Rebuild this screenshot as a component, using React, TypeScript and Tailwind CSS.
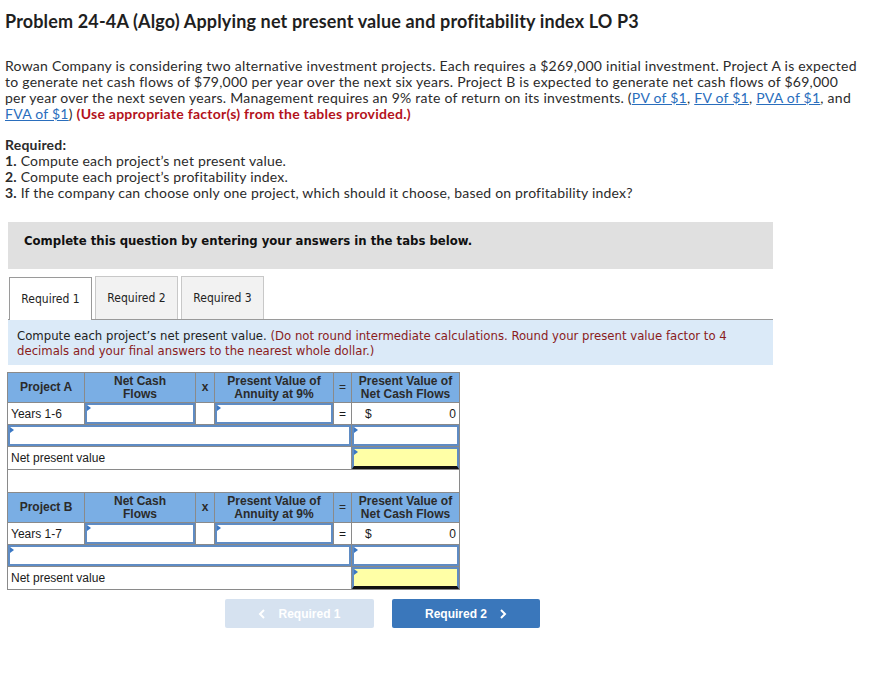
import React from "react";

const body = { fontFamily: "Lato, 'Open Sans', sans-serif" };
const tahoma = { fontFamily: "'DejaVu Sans Condensed', 'DejaVu Sans', sans-serif" };
const arial = { fontFamily: "'Liberation Sans', Arial, sans-serif" };

function Marker() {
  return (
    <span className="absolute left-0 top-0 w-0 h-0 border-t-[3px] border-b-[3px] border-l-[4px] border-t-transparent border-b-transparent border-l-[#3b78c4]" />
  );
}

function InputBox({ yellow = false, thickBottom = false }: { yellow?: boolean; thickBottom?: boolean }) {
  return (
    <div
      className={`relative h-full w-full border-2 border-[#5f8cc4] ${yellow ? "bg-[#ffffa6]" : "bg-white"} ${thickBottom ? "border-b-[#111] border-b-[3px]" : ""}`}
    >
      <Marker />
    </div>
  );
}

function ProjectRows({ name, years }: { name: string; years: string }) {
  const td = "border border-[#8a8a8a] p-0";
  return (
    <>
      <tr className="h-[30px] bg-[#7aaee4] text-[#2b2b2b] font-bold text-[12px] leading-[13px]">
        <td className={`${td} text-center`}>{name}</td>
        <td className={`${td} text-center`}>Net Cash<br />Flows</td>
        <td className={`${td} text-center`}>x</td>
        <td className={`${td} text-center`}>Present Value of<br />Annuity at 9%</td>
        <td className={`${td} text-center font-normal`}>=</td>
        <td className={`${td} text-center`}>Present Value of<br />Net Cash Flows</td>
      </tr>
      <tr className="h-[22px] text-[12px]">
        <td className={`${td} pl-[3px]`}>{years}</td>
        <td className={`${td} h-[22px]`}><InputBox /></td>
        <td className={td}></td>
        <td className={`${td} h-[22px]`}><InputBox /></td>
        <td className={`${td} text-center`}>=</td>
        <td className={td}>
          <div className="flex justify-between px-[13px] pr-[3px]">
            <span>$</span>
            <span>0</span>
          </div>
        </td>
      </tr>
      <tr className="h-[22px]">
        <td className={`${td} h-[22px]`} colSpan={5}><InputBox /></td>
        <td className={`${td} h-[22px]`}><InputBox /></td>
      </tr>
      <tr className="h-[23px] text-[12px]">
        <td className={`${td} pl-[3px]`} colSpan={5}>Net present value</td>
        <td className={`${td} h-[23px]`}><InputBox yellow thickBottom /></td>
      </tr>
    </>
  );
}

export default function App() {
  const link = "text-[#2a6ebd] underline";
  return (
    <div className="w-[883px] min-h-[692px] bg-white text-[#2b2b2b]">
      <div className="px-[5px] pt-[11px]" style={body}>
        <h1 className="text-[18px] leading-[20px] font-bold text-[#1f1f1f] tracking-[0.15px]">
          Problem 24-4A (Algo) Applying net present value and profitability index LO P3
        </h1>
        <p className="mt-[27px] w-[853px] text-[14px] leading-[16px] tracking-[0.25px]">
          Rowan Company is considering two alternative investment projects. Each requires a $269,000 initial investment. Project A is expected to generate net cash flows of $79,000 per year over the next six years. Project B is expected to generate net cash flows of $69,000 per year over the next seven years. Management requires an 9% rate of return on its investments. (<span className={link}>PV of $1</span>, <span className={link}>FV of $1</span>, <span className={link}>PVA of $1</span>, and <span className={link}>FVA of $1</span>){" "}
          <span className="font-bold text-[#b3121b]">(Use appropriate factor(s) from the tables provided.)</span>
        </p>
        <div className="mt-[15px] text-[14px] leading-[16px] tracking-[0.2px]">
          <div className="font-bold">Required:</div>
          <div><b>1.</b> Compute each project’s net present value.</div>
          <div><b>2.</b> Compute each project’s profitability index.</div>
          <div><b>3.</b> If the company can choose only one project, which should it choose, based on profitability index?</div>
        </div>
      </div>

      <div className="ml-[8px] w-[765px]" style={tahoma}>
        <div className="mt-[21px] h-[47px] bg-[#e0e0e0] pl-[16px] pt-[11px] text-[13px] leading-[16px] font-bold text-[#111]">
          Complete this question by entering your answers in the tabs below.
        </div>
        <div className="mt-[8px] flex gap-[3px] border-b border-[#9a9a9a] h-[43px] items-end">
          <div className="h-[43px] w-[83px] ml-[1px] bg-white border border-b-0 border-[#9a9a9a] flex items-center justify-center text-[12px] text-[#222] -mb-px">
            Required 1
          </div>
          <div className="h-[43px] w-[83px] bg-[#f2f2f2] border border-b-0 border-[#c8c8c8] flex items-center justify-center text-[12px] text-[#222]">
            Required 2
          </div>
          <div className="h-[43px] w-[83px] bg-[#f2f2f2] border border-b-0 border-[#c8c8c8] flex items-center justify-center text-[12px] text-[#222]">
            Required 3
          </div>
        </div>
        <div className="bg-[#dbeaf8] h-[45px] pl-[9px] pt-[8px] text-[13px] leading-[15px] text-[#222]">
          Compute each project’s net present value.{" "}
          <span className="text-[#8a1c1c]">
            (Do not round intermediate calculations. Round your present value factor to 4 decimals and your final answers to the nearest whole dollar.)
          </span>
        </div>
      </div>

      <div className="ml-[7px] mt-[7px]" style={arial}>
        <table className="table-fixed border-collapse w-[452px] text-[#1a1a1a]">
          <colgroup>
            <col className="w-[77px]" />
            <col className="w-[111px]" />
            <col className="w-[19px]" />
            <col className="w-[119px]" />
            <col className="w-[18px]" />
            <col className="w-[108px]" />
          </colgroup>
          <tbody>
            <ProjectRows name="Project A" years="Years 1-6" />
            <tr className="h-[23px]">
              <td colSpan={6} className="border border-[#8a8a8a] p-0"></td>
            </tr>
            <ProjectRows name="Project B" years="Years 1-7" />
          </tbody>
        </table>
      </div>

      <div className="mt-[9px] ml-[225px] flex gap-[18px]" style={arial}>
        <div className="w-[149px] h-[29px] rounded-[2px] bg-[#d6e2f0] text-white font-bold text-[12px] flex items-center justify-center gap-[12px]">
          <svg width="8" height="10" viewBox="0 0 8 10"><path d="M6 1 L2 5 L6 9" stroke="white" strokeWidth="2" fill="none" /></svg>
          Required 1
        </div>
        <div className="w-[148px] h-[29px] rounded-[2px] bg-[#3a77bb] text-white font-bold text-[12px] flex items-center justify-center gap-[12px]">
          Required 2
          <svg width="8" height="10" viewBox="0 0 8 10"><path d="M2 1 L6 5 L2 9" stroke="white" strokeWidth="2" fill="none" /></svg>
        </div>
      </div>
    </div>
  );
}
